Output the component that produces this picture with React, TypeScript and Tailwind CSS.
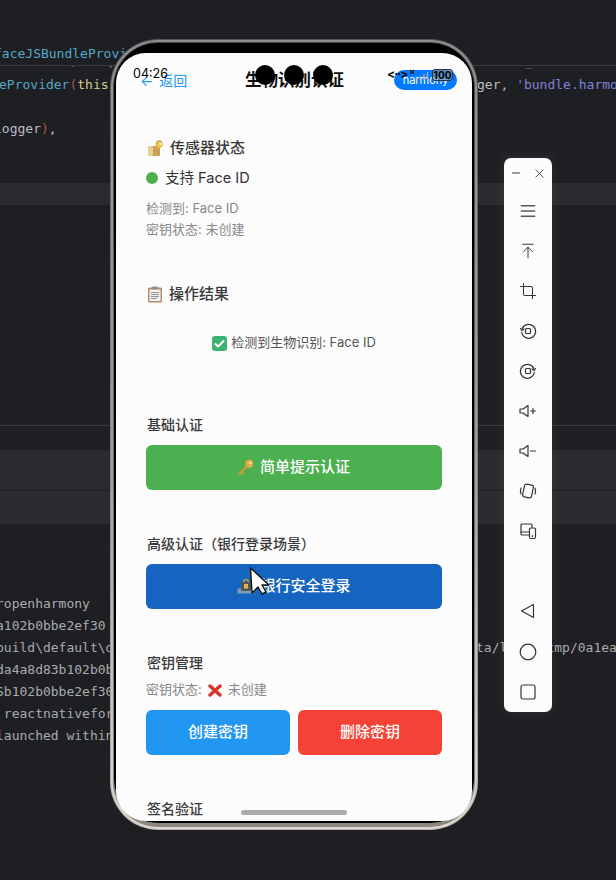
import React from 'react';
import { Minus, X, Crop, ArrowUpToLine, AlignJustify } from 'lucide-react';

const mono = "font-['DejaVu_Sans_Mono',monospace]";
const cjk = "font-['Inter','Noto_Sans_CJK_SC',sans-serif]";

const LockEmoji = () => (
  <svg width="17" height="17" viewBox="0 0 17 17" className="shrink-0">
    <path d="M9.5 6V3.6a2.6 2.6 0 0 1 5.2 0V6" fill="none" stroke="#c9a24a" strokeWidth="1.5" />
    <rect x="1" y="6" width="12" height="10" rx="1.5" fill="#c9a452" />
    <rect x="1" y="6" width="5" height="10" rx="1.5" fill="#e6cf96" />
    <circle cx="12.5" cy="5" r="3" fill="#f0c64a" />
    <circle cx="13.5" cy="4" r="1" fill="#fff3c4" />
  </svg>
);

const ClipboardEmoji = () => (
  <svg width="16" height="17" viewBox="0 0 16 17" className="shrink-0">
    <rect x="1" y="1.5" width="14" height="15" rx="1.5" fill="#b98a6b" />
    <rect x="2.5" y="3.5" width="11" height="11.5" fill="#f3f1ee" />
    <rect x="5" y="0.5" width="6" height="3" rx="1" fill="#8a8f96" />
    <path d="M4 6.5h8M4 8.5h8M4 10.5h8M4 12.5h6" stroke="#8f9499" strokeWidth="1" />
  </svg>
);

const CheckEmoji = () => (
  <svg width="15" height="15" viewBox="0 0 15 15" className="shrink-0">
    <rect x="0" y="0" width="15" height="15" rx="3" fill="#3cb371" />
    <path d="M3.5 8l2.7 2.5 5.3-5.5" fill="none" stroke="#fff" strokeWidth="2" strokeLinecap="round" strokeLinejoin="round" />
  </svg>
);

const KeyEmoji = () => (
  <svg width="16" height="17" viewBox="0 0 16 17" className="shrink-0">
    <circle cx="11.2" cy="4.8" r="4" fill="#e2ae4a" />
    <circle cx="12.2" cy="3.8" r="1.2" fill="#fbe7ae" />
    <path d="M8.8 7.5L1.5 15" stroke="#d39a3a" strokeWidth="2.4" strokeLinecap="round" />
    <path d="M3.5 13l2 2" stroke="#d39a3a" strokeWidth="1.8" />
  </svg>
);

const BankEmoji = () => (
  <svg width="17" height="15" viewBox="0 0 17 15" className="shrink-0">
    <rect x="0.5" y="9.5" width="16" height="5" fill="#7f9fb8" />
    <rect x="4" y="3" width="10" height="9" rx="1" fill="#50565c" />
    <path d="M6.5 3a2.5 2.5 0 0 1 5 0" fill="none" stroke="#c79a3e" strokeWidth="1.4" />
    <rect x="7" y="5" width="4" height="4.5" fill="#e3b648" />
  </svg>
);

const CrossEmoji = () => (
  <svg width="14" height="13" viewBox="0 0 14 13" className="shrink-0">
    <path d="M2 2l10 9M12 2L2 11" stroke="#d8322a" strokeWidth="3.4" strokeLinecap="round" />
  </svg>
);

const ToolIcon = ({ children }: { children: React.ReactNode }) => (
  <svg width="18" height="18" viewBox="0 0 18 18" fill="none" stroke="#33353a" strokeWidth="1.2" strokeLinecap="round" strokeLinejoin="round">
    {children}
  </svg>
);

const Section = ({ className = '', children }: { className?: string; children: React.ReactNode }) => (
  <div className={`text-[14px] leading-[20px] font-medium text-[#3a3a3a] pl-px ${className}`}>{children}</div>
);

const ActionButton = ({ color, children }: { color: string; children: React.ReactNode }) => (
  <div className={`h-[45px] flex-1 rounded-[6px] flex items-center justify-center gap-[6px] text-white text-[15px] font-medium ${color}`}>
    {children}
  </div>
);

const terminal = [
  'ropenharmony',
  'a102b0bbe2ef30',
  'build\\default\\d',
  'da4a8d83b102b0b',
  'Sb102b0bbe2ef30',
  ' reactnativefor',
  'launched within',
];

const Backdrop = () => (
  <div className={`flex flex-col text-[13px] ${mono}`}>
    <div className="h-[43px]" />
    <div className="h-[22px] leading-[22px] whitespace-nowrap text-[#56a8c8] -ml-[6px]">faceJSBundleProvider</div>
    <div className="h-[9px] overflow-hidden border-t border-[#3a3c40] leading-[22px] whitespace-nowrap flex text-[#8f7a62]">
      <span className="w-[478px] pl-[68px] -mt-[15px] shrink-0">(this,</span>
      <span className="-mt-[15px] text-[#5f6cae]">  hermes_bundle</span>
    </div>
    <div className="h-[22px] leading-[22px] whitespace-nowrap flex">
      <span className="w-[478px] shrink-0 -ml-[1px] text-[#56a8c8]">
        eProvider<span className="text-[#b3544f]">(</span><span className="text-[#d5cb8e]">this</span>
      </span>
      <span className="text-[#bcbec4]">ger, <span className="text-[#7d84d8]">'bundle.harmony'</span></span>
    </div>
    <div className="h-[22px]" />
    <div className="h-[22px] leading-[22px] text-[#bcbec4] -ml-[6px]">logger<span className="text-[#b3544f]">)</span>,</div>
    <div className="h-[43px]" />
    <div className="h-[22px] bg-[#2a2b2f]" />
    <div className="h-[220px]" />
    <div className="h-px bg-[#393b40]" />
    <div className="h-[24px]" />
    <div className="h-[40px] bg-[#2a2b2f]" />
    <div className="h-px bg-[#1e1f22]" />
    <div className="h-[33px] bg-[#2a2b2f]" />
    <div className="h-[69px]" />
    {terminal.map((line, i) => (
      <div key={i} className="h-[22px] leading-[22px] whitespace-nowrap flex text-[#a9abb0] -ml-[4px]">
        <span className="w-[480px] shrink-0 whitespace-pre">{line}</span>
        {i === 2 && <span>ta/local/tmp/0a1ea</span>}
      </div>
    ))}
  </div>
);

const Phone = () => (
  <div className="absolute left-[110px] top-[39px] w-[368px] h-[791px] rounded-[48px] bg-linear-to-b from-[#555659] to-[#b9b4aa] p-px">
    <div className="w-full h-full rounded-[47px] bg-linear-to-b from-[#8f8f8f] via-[#9a9a9a] to-[#dcd8d0] p-[2px]">
      <div className="w-full h-full rounded-[45px] bg-linear-to-b from-[#444548] to-[#8d887f] pt-px px-px pb-[4px]">
        <div className="w-full h-full rounded-[44px] bg-black pt-[10px] pb-[2px] px-[2px]">
          <div className={`relative w-full h-full rounded-[30px] overflow-hidden bg-[#fcfcfc] ${cjk}`}>
            {/* status bar sits over the app header */}
            <div className="absolute left-[17px] top-[13px] text-[12.5px] leading-[16px] text-black">04:26</div>
            <div className="absolute left-[139px] top-[12px] w-[20px] h-[20px] rounded-full bg-black" />
            <div className="absolute left-[168px] top-[12px] w-[20px] h-[20px] rounded-full bg-black" />
            <div className="absolute left-[197px] top-[12px] w-[20px] h-[20px] rounded-full bg-black" />
            <div className="absolute left-[271px] top-[13px] text-[12px] leading-[16px] font-bold text-black tracking-[-1px]">&lt;··&gt;</div>
            <svg className="absolute left-[293px] top-[16px]" width="6" height="6" viewBox="0 0 6 6">
              <path d="M1 1l4 4M5 1L1 5" stroke="#222" strokeWidth="1.4" />
            </svg>
            <svg className="absolute left-[300px] top-[17px]" width="15" height="10" viewBox="0 0 15 10">
              <path d="M1 10V8M4.5 10V6M8 10V4M11.5 10V2" stroke="#a9aeb3" strokeWidth="1.4" />
            </svg>
            <div className="absolute left-[316px] top-[16px] w-[21px] h-[12px] rounded-[3px] border border-[#333] text-[10px] leading-[10px] text-center font-bold text-black bg-[#8f959b]/60">100</div>

            <div className="mt-[15px] h-[24px] pl-[24px] pr-[15px] flex items-center justify-between">
              <div className="w-[55px] flex items-center gap-[6px] text-[14px] text-[#2196f3] whitespace-nowrap">
                <span>←</span><span>返回</span>
              </div>
              <div className="text-[16.5px] font-bold text-[#111]">生物识别认证</div>
              <div className="w-[63px] h-[20px] rounded-full bg-[#007aff] text-white text-[11px] leading-[20px] text-center">harmony</div>
            </div>

            <div className="px-[30px]">
              <div className="mt-[45px] h-[22px] flex items-center gap-[6px] text-[15px] font-medium text-[#3a3a3a] pl-px">
                <LockEmoji />传感器状态
              </div>
              <div className="mt-[8px] h-[22px] flex items-center gap-[7px] text-[14.5px] text-[#333]">
                <span className="w-[12px] h-[12px] rounded-full bg-[#4caf50]" />支持 Face ID
              </div>
              <div className="mt-[9px] text-[13px] leading-[20.5px] text-[#888]">
                <div>检测到: Face ID</div>
                <div>密钥状态: 未创建</div>
              </div>

              <div className="mt-[44px] h-[22px] flex items-center gap-[6px] text-[15px] font-medium text-[#3a3a3a] pl-px">
                <ClipboardEmoji />操作结果
              </div>
              <div className="mt-[28px] h-[20px] flex items-center justify-center gap-[4px] text-[13px] text-[#555]">
                <CheckEmoji />检测到生物识别: Face ID
              </div>

              <Section className="mt-[62px]">基础认证</Section>
              <div className="mt-[10px] flex">
                <ActionButton color="bg-[#4caf50]"><KeyEmoji />简单提示认证</ActionButton>
              </div>

              <Section className="mt-[44px]">高级认证（银行登录场景）</Section>
              <div className="mt-[10px] flex">
                <ActionButton color="bg-[#1565c0]"><BankEmoji />银行安全登录</ActionButton>
              </div>

              <Section className="mt-[44px]">密钥管理</Section>
              <div className="mt-[7px] h-[20px] flex items-center gap-[6px] text-[13px] text-[#888]">
                密钥状态: <CrossEmoji /> 未创建
              </div>
              <div className="mt-[10px] flex gap-[8px]">
                <ActionButton color="bg-[#2196f3]">创建密钥</ActionButton>
                <ActionButton color="bg-[#f44336]">删除密钥</ActionButton>
              </div>

              <Section className="mt-[44px]">签名验证</Section>
            </div>

            <div className="absolute left-[125px] bottom-[6px] w-[106px] h-[5px] rounded-full bg-[#aaa]" />
          </div>
        </div>
      </div>
    </div>
  </div>
);

const Toolbar = () => (
  <div className="absolute left-[504px] top-[158px] w-[48px] h-[554px] rounded-[7px] bg-[#fcfcfc] shadow-[0_0_10px_6px_rgba(255,255,255,0.03)] flex flex-col items-center text-[#33353a]">
    <div className="mt-[8px] h-[14px] w-full pl-[6px] pr-[5px] flex items-center justify-between">
      <Minus size={12} strokeWidth={2} />
      <X size={15} strokeWidth={1.3} />
    </div>
    <div className="mt-[22px] flex flex-col items-center gap-[22px]">
      <AlignJustify size={18} strokeWidth={1.7} color="#55575c" />
      <ArrowUpToLine size={18} strokeWidth={1.3} />
      <Crop size={18} strokeWidth={1.4} />
      <ToolIcon>
        <path d="M3 7a7 7 0 1 1-.3 3.5" />
        <path d="M1.5 6.5L3 8.5 5 7" />
        <rect x="6.5" y="6.5" width="5" height="5" rx="1" />
      </ToolIcon>
      <ToolIcon>
        <path d="M15 7a7 7 0 1 0 .3 3.5" />
        <path d="M16.5 6.5L15 8.5 13 7" />
        <rect x="6.5" y="6.5" width="5" height="5" rx="1" />
      </ToolIcon>
      <ToolIcon>
        <path d="M1 7h3l5-3.5v11L4 11H1z" />
        <path d="M11.5 9h5M14 6.5v5" />
      </ToolIcon>
      <ToolIcon>
        <path d="M1 7h3l5-3.5v11L4 11H1z" />
        <path d="M11.5 9h5" />
      </ToolIcon>
      <ToolIcon>
        <rect x="4.5" y="2.5" width="9" height="13" rx="2" transform="rotate(12 9 9)" />
        <path d="M2 6a8 8 0 0 0 0 6M16 6a8 8 0 0 1 0 6" />
      </ToolIcon>
      <ToolIcon>
        <path d="M10 13H3a1 1 0 0 1-1-1V3a1 1 0 0 1 1-1h9a1 1 0 0 1 1 1v2" />
        <path d="M2 10h8" />
        <rect x="10.5" y="6" width="6" height="10.5" rx="1.2" />
        <path d="M13.5 14v.2" strokeWidth="1.6" />
      </ToolIcon>
    </div>
    <div className="mt-[62px] flex flex-col items-center gap-[22.5px]">
      <ToolIcon>
        <path d="M14.5 2.5v13L2.5 9z" />
      </ToolIcon>
      <ToolIcon>
        <circle cx="9" cy="9" r="7.8" />
      </ToolIcon>
      <ToolIcon>
        <rect x="2" y="2" width="14" height="14" rx="2" />
      </ToolIcon>
    </div>
  </div>
);

export default function App() {
  return (
    <div className="relative w-[616px] h-[880px] overflow-hidden bg-[#1e1f22]">
      <Backdrop />
      <Phone />
      <Toolbar />
      {/* mouse pointer caught in the capture */}
      <svg className="absolute left-[249px] top-[567px]" width="24" height="30" viewBox="0 0 24 30">
        <path d="M1.5 1L3 26l6-6 4 7 4-2-4-7h7z" fill="#fff" stroke="#111" strokeWidth="1.4" strokeLinejoin="round" />
      </svg>
    </div>
  );
}
